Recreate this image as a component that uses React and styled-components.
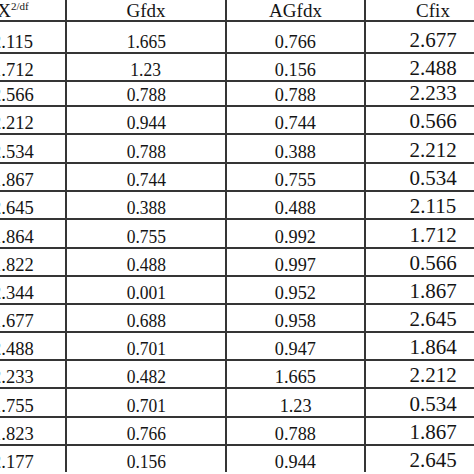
import React from 'react';
import styled, { createGlobalStyle } from 'styled-components';

const GlobalStyle = createGlobalStyle`
  html, body {
    margin: 0;
    padding: 0;
    background: #ffffff;
    overflow: hidden;
  }
  body {
    font-family: "Liberation Serif", "Times New Roman", serif;
    color: #141414;
  }
`;

// row heights measured from the rule positions (header is cropped at the top)
const rowHeights = [20, 30, 26, 23, 26, 27, 26, 26, 27, 26, 26, 26, 26, 26, 27, 26, 26];

// the scan is slightly squeezed sideways, a bit differently per column
const columns = [
    { key: 'x2df', width: 104, size: 19.5, squeeze: 0.95 },
    { key: 'gfdx', width: 158, size: 19, squeeze: 0.92 },
    { key: 'agfdx', width: 137, size: 19, squeeze: 0.96 },
    { key: 'cfix', width: 134, size: 21, squeeze: 1 },
];

const rows = [
    ['2.115', '1.665', '0.766', '2.677'],
    ['1.712', '1.23', '0.156', '2.488'],
    ['2.566', '0.788', '0.788', '2.233'],
    ['2.212', '0.944', '0.744', '0.566'],
    ['2.534', '0.788', '0.388', '2.212'],
    ['1.867', '0.744', '0.755', '0.534'],
    ['2.645', '0.388', '0.488', '2.115'],
    ['1.864', '0.755', '0.992', '1.712'],
    ['1.822', '0.488', '0.997', '0.566'],
    ['2.344', '0.001', '0.952', '1.867'],
    ['1.677', '0.688', '0.958', '2.645'],
    ['2.488', '0.701', '0.947', '1.864'],
    ['2.233', '0.482', '1.665', '2.212'],
    ['1.755', '0.701', '1.23', '0.534'],
    ['1.823', '0.766', '0.788', '1.867'],
    ['2.177', '0.156', '0.944', '2.645'],
];

export default function App() {
    return (
        <React.Fragment>
            <GlobalStyle />
            <Table $rows={rowHeights} $cols={columns.map((c) => c.width)}>
                <HeadCell>
                    <HeadText>
                        X<Sup>2/df</Sup>
                    </HeadText>
                </HeadCell>
                <HeadCell><HeadText>Gfdx</HeadText></HeadCell>
                <HeadCell><HeadText>AGfdx</HeadText></HeadCell>
                <HeadCell><HeadText>Cfix</HeadText></HeadCell>

                {rows.map((row, i) =>
                    row.map((value, j) => (
                        <Cell key={i + '-' + j}>
                            <Value $size={columns[j].size} $squeeze={columns[j].squeeze}>
                                {value}
                            </Value>
                        </Cell>
                    ))
                )}
            </Table>
        </React.Fragment>
    );
}

const Table = styled.div`
    display: grid;
    grid-template-columns: ${(p) => p.$cols.map((w) => w + 'px').join(' ')};
    grid-template-rows: ${(p) => p.$rows.map((h) => h + 'px').join(' ')};
    gap: 2px;
    width: max-content;
    margin-left: -39px;
    background: #353535;
`;

const HeadCell = styled.div`
    background: #ffffff;
    display: flex;
    justify-content: center;
    align-items: flex-start;
    padding-top: 1px;
    overflow: hidden;
`;

const HeadText = styled.span`
    font-size: 19px;
    line-height: 19px;
    white-space: nowrap;
`;

const Sup = styled.span`
    font-size: 11px;
    line-height: 11px;
    vertical-align: 7px;
`;

const Cell = styled.div`
    background: #ffffff;
    display: flex;
    justify-content: center;
    align-items: flex-end;
    padding-bottom: 1px;
`;

const Value = styled.span`
    display: inline-block;
    font-size: ${(p) => p.$size}px;
    line-height: ${(p) => p.$size}px;
    white-space: nowrap;
    transform: scaleX(${(p) => p.$squeeze});
    transform-origin: center bottom;
`;
